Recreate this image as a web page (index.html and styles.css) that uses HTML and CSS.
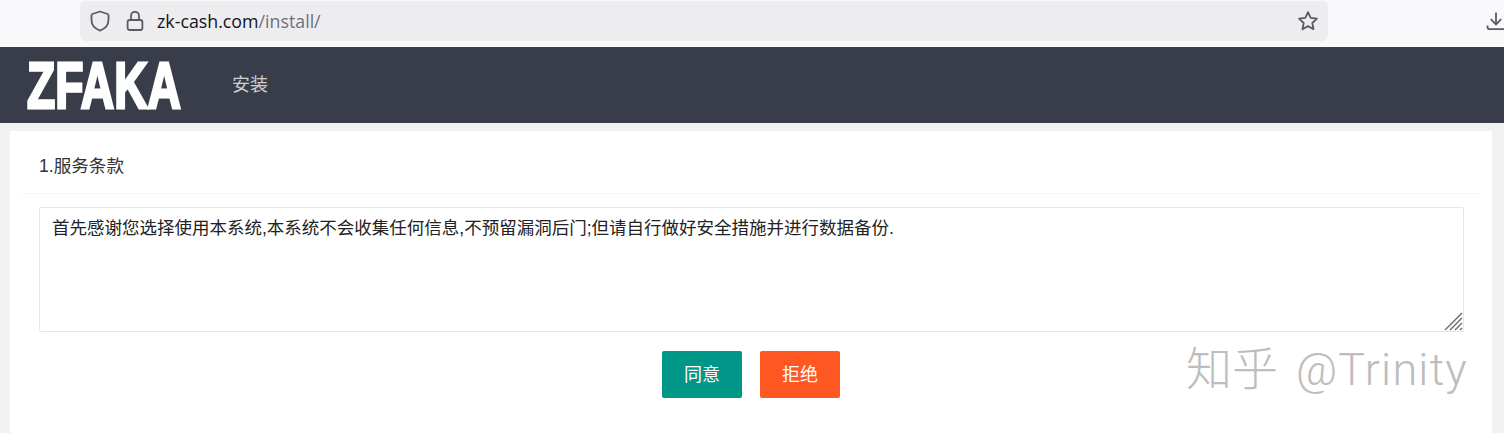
FILE: index.html
```html
<!DOCTYPE html>
<html lang="zh-CN">
<head>
<meta charset="utf-8">
<title>ZFAKA 安装</title>
<link rel="stylesheet" href="styles.css">
</head>
<body>
<div class="browser">
  <div class="urlbar">
    <svg class="icon shield" viewBox="0 0 20 22" width="20" height="22"><path d="M10 1.5 L17.6 4 Q18.5 4.4 18.5 5.3 V10 C18.5 15 14.5 18.9 10 20.6 C5.5 18.9 1.5 15 1.5 10 V5.3 Q1.5 4.4 2.4 4 Z" fill="none" stroke="#5b5b66" stroke-width="1.8" stroke-linejoin="round"/></svg>
    <svg class="icon lock" viewBox="0 0 18 20" width="18" height="20"><path d="M5 9 V4.8 a4 4 0 0 1 8 0 V9" fill="none" stroke="#5b5b66" stroke-width="1.8"/><rect x="1.6" y="9" width="14.8" height="10" rx="2" fill="none" stroke="#5b5b66" stroke-width="1.8"/></svg>
    <span class="url"><span class="host">zk-cash.com</span>/install/</span>
    <svg class="icon star" viewBox="0 0 22 22" width="22" height="22"><path d="M11 2.2 L13.7 7.9 L19.9 8.7 L15.3 13 L16.5 19.2 L11 16.1 L5.5 19.2 L6.7 13 L2.1 8.7 L8.3 7.9 Z" fill="none" stroke="#5b5b66" stroke-width="1.8" stroke-linejoin="round"/></svg>
  </div>
  <svg class="icon download" viewBox="0 0 20 20" width="20" height="20"><path d="M10 1.5 V13 M4.8 8.2 L10 13.4 L15.2 8.2 M1.5 14.5 V16 Q1.5 18.2 3.7 18.2 H20" fill="none" stroke="#5b5b66" stroke-width="1.8"/></svg>
</div>
<header class="topnav">
  <div class="logo"><span class="logo-text">ZFAKA</span></div>
  <a class="nav-item">安装</a>
</header>
<main class="page">
  <section class="card">
    <div class="card-title">1.服务条款</div>
    <div class="card-body">
      <div class="terms-wrap">
        <textarea class="terms" readonly>首先感谢您选择使用本系统,本系统不会收集任何信息,不预留漏洞后门;但请自行做好安全措施并进行数据备份.</textarea>
        <svg class="grip" viewBox="0 0 19 19" width="19" height="19"><path d="M1 18 L18 1 M6 18 L18 6 M11 18 L18 11 M16 18 L18 16" stroke="#6b6b6b" stroke-width="1.4" fill="none"/></svg>
      </div>
      <div class="actions">
        <button class="btn agree">同意</button>
        <button class="btn refuse">拒绝</button>
      </div>
    </div>
  </section>
</main>
<div class="watermark"><span class="wm-cjk">知乎</span><span class="wm-latin">@Trinity</span></div>
</body>
</html>
```

FILE: styles.css
```css
* { box-sizing: border-box; }
html, body { margin: 0; height: 433px; overflow: hidden; }
body {
  background: #f2f2f2;
  font-family: "Liberation Sans", "Noto Sans CJK SC", sans-serif;
  color: #333;
  position: relative;
}
.browser {
  height: 47px;
  background: #f9f9fb;
  border-bottom: 1px solid #fff;
  display: flex;
  padding: 1px 0 0 80px;
  position: relative;
}
.urlbar {
  width: 1248px;
  height: 40px;
  background: #ededf0;
  border-radius: 6px;
  display: flex;
  align-items: center;
  padding: 0 9px 0 10px;
}
.icon { display: block; flex: none; }
.lock { margin-left: 16px; }
.url {
  margin-left: 13px;
  font-family: "Open Sans", "Noto Sans", sans-serif;
  font-size: 17.8px;
  color: #6f6f78;
  flex: 1;
}
.host { color: #15141a; }
.download { position: absolute; left: 1486px; top: 11px; }
.topnav {
  height: 76px;
  background: #393d49;
  display: flex;
  align-items: center;
  padding-left: 27px;
}
.logo { width: 205px; height: 76px; overflow: hidden; }
.logo-text {
  display: block;
  font-family: "Liberation Sans", sans-serif;
  font-weight: 700;
  font-size: 65px;
  line-height: 78px;
  color: #fff;
  -webkit-text-stroke: 3px #fff;
  transform: scaleX(0.71);
  transform-origin: 0 50%;
  white-space: nowrap;
}
.nav-item {
  font-size: 18px;
  line-height: 24px;
  color: rgba(255, 255, 255, .75);
}
.page { padding: 8px 12px 0 10px; }
.card {
  background: #fff;
  border-radius: 2px;
  height: 302px;
}
.card-title {
  height: 63px;
  margin: 0 10px;
  padding: 0 19px;
  border-bottom: 1px solid #f6f6f6;
  line-height: 70px;
  font-size: 17.6px;
  color: #333;
}
.card-body { padding: 13px 28px 0 29px; }
.terms-wrap { position: relative; }
.terms {
  display: block;
  width: 100%;
  height: 125px;
  border: 1px solid #e6e6e6;
  border-radius: 2px;
  padding: 8px 12px;
  font-family: "Liberation Sans", "Noto Sans CJK SC", sans-serif;
  font-size: 17.5px;
  line-height: 24px;
  color: #222;
  background: #fff;
  outline: none;
  resize: none;
}
.grip { position: absolute; right: 1px; bottom: 1px; display: block; }
.actions {
  display: flex;
  justify-content: center;
  gap: 18px;
  margin-top: 19px;
  padding-right: 1px;
}
.btn {
  width: 80px;
  height: 47px;
  border: 0;
  border-radius: 2px;
  color: #fff;
  font-family: "Liberation Sans", "Noto Sans CJK SC", sans-serif;
  font-size: 18px;
  padding: 0 0 4px;
}
.agree { background: #009688; }
.refuse { background: #ff5722; }
.watermark {
  position: absolute;
  left: 1186px;
  top: 335px;
  display: flex;
  align-items: baseline;
  gap: 18px;
  line-height: 60px;
  color: #bdbdbd;
  white-space: nowrap;
}
.wm-cjk {
  font-family: "Noto Sans CJK SC", sans-serif;
  font-weight: 300;
  font-size: 46px;
}
.wm-latin {
  font-family: Roboto, sans-serif;
  font-weight: 300;
  font-size: 45px;
  letter-spacing: 1.2px;
}
```
